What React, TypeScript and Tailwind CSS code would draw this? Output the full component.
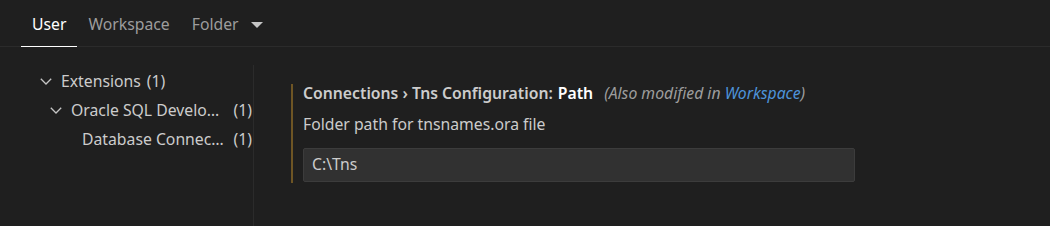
const FONT = { fontFamily: '"Segoe UI", "Noto Sans", "Open Sans", sans-serif' }

function Chevron() {
  return (
    <svg width="12" height="7" viewBox="0 0 12 7" className="shrink-0">
      <path d="M0.8 0.8L6 6L11.2 0.8" fill="none" stroke="#c5c5c5" strokeWidth="1.3" />
    </svg>
  )
}

function Tab({ label, active }: { label: string; active?: boolean }) {
  return (
    <div
      className={`-mb-px flex h-[47px] items-center px-[11px] pt-[3px] text-[15.75px] ${
        active ? 'border-b border-white text-white' : 'text-[#9d9d9d]'
      }`}
    >
      {label}
    </div>
  )
}

function TreeRow({
  label,
  indent,
  chevron,
}: {
  label: string
  indent: number
  chevron?: boolean
}) {
  return (
    <div className="flex h-[29px] items-center text-[15.75px] text-[#cccccc]">
      <div className="flex w-fit shrink-0 items-center" style={{ paddingLeft: indent }}>
        {chevron ? <Chevron /> : <span className="w-[12px]" />}
      </div>
      <span className="ml-[9px] min-w-0 truncate">{label}</span>
      <span className="ml-[6px] shrink-0 pr-[1px]">(1)</span>
    </div>
  )
}

export default function App() {
  return (
    <div className="h-[226px] w-[1050px] overflow-hidden bg-[#1f1f1f]" style={FONT}>
      {/* tabs */}
      <div className="flex h-[47px] items-stretch border-b border-[#2b2b2b] pl-[21px]">
        <Tab label="User" active />
        <Tab label="Workspace" />
        <Tab label="Folder" />
        <div className="flex items-center pl-[1px] pt-[3px]">
          <svg width="12" height="6" viewBox="0 0 12 6">
            <path d="M0 0h12L6 6z" fill="#c5c5c5" />
          </svg>
        </div>
      </div>

      <div className="mt-[18px] flex h-full">
        {/* table of contents */}
        <div className="w-[254px] shrink-0 border-r border-[#2b2b2b] pt-[2px]">
          <TreeRow label="Extensions" indent={40} chevron />
          <TreeRow label="Oracle SQL Developer" indent={50} chevron />
          <TreeRow label="Database Connections" indent={61} />
        </div>

        {/* setting */}
        <div className="flex-1 pl-[37px] pt-[19px]">
          <div className="w-[564px] border-l-2 border-[#6e5524] pb-[1px] pl-[10px]">
            <div className="flex h-[18px] items-center whitespace-nowrap text-[15.75px] leading-[18px] text-[#cccccc]">
              <span className="font-semibold">Connections › Tns Configuration:</span>
              <span className="ml-[5px] font-semibold text-white">Path</span>
              <span className="ml-[11px] italic text-[#9d9d9d]">
                (Also modified in <span className="text-[#4d93d9]">Workspace</span>)
              </span>
            </div>
            <div className="mt-[13px] text-[15.75px] leading-[18px] text-[#cccccc]">
              Folder path for tnsnames.ora file
            </div>
            <div className="mt-[15px] flex h-[34px] w-[552px] items-center rounded-[2px] border border-[#3c3c3c] bg-[#313131] px-[8px] text-[15.75px] text-[#cccccc]">
              C:\Tns
            </div>
          </div>
        </div>
      </div>
    </div>
  )
}
